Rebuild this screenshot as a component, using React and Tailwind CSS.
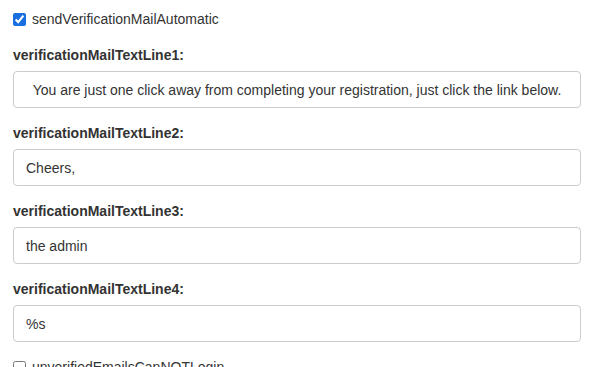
import React from "react";

const lines = [
  {
    name: "verificationMailTextLine1",
    value:
      "You are just one click away from completing your registration, just click the link below.",
    center: true,
  },
  { name: "verificationMailTextLine2", value: "Cheers," },
  { name: "verificationMailTextLine3", value: "the admin" },
  { name: "verificationMailTextLine4", value: "%s" },
];

const CheckRow = ({ label, checked, className = "" }) => (
  <label className={"flex items-center h-5 text-[14px] text-[#333] " + className}>
    <input
      type="checkbox"
      defaultChecked={checked}
      className="w-[13px] h-[13px] m-0 mr-[6px] accent-[#1a6fe0]"
    />
    <span>{label}</span>
  </label>
);

const App = () => {
  return (
    <div
      className="bg-white w-[593px] h-[367px] overflow-hidden pl-[13px] pt-[9px]"
      style={{ fontFamily: '"Liberation Sans", Arial, sans-serif' }}
    >
      <CheckRow label="sendVerificationMailAutomatic" checked className="mb-4" />
      {lines.map((l) => (
        <div key={l.name} className="mb-[15px]">
          <div className="h-5 leading-5 mb-[6px] text-[14px] font-bold text-[#333]">
            {l.name}:
          </div>
          <input
            type="text"
            readOnly
            value={l.value}
            className={
              "block w-[568px] h-[37px] px-3 border border-[#ccc] rounded-[4px] text-[14px] text-[#333] outline-none bg-white" +
              (l.center ? " text-center" : "")
            }
          />
        </div>
      ))}
      <CheckRow label="unverifiedEmailsCanNOTLogin" />
    </div>
  );
};

export default App;
